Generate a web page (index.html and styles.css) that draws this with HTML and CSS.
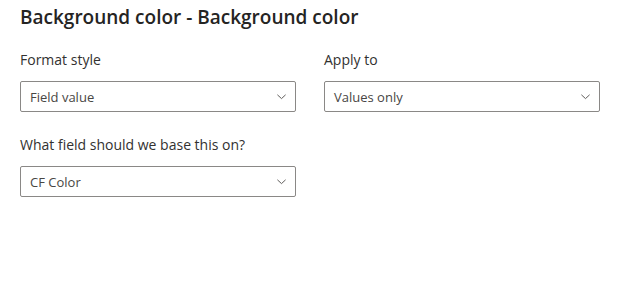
FILE: index.html
```html
<!DOCTYPE html>
<html>
<head>
<meta charset="utf-8">
<link rel="stylesheet" href="styles.css">
</head>
<body>
<div class="panel">
  <h1 class="title">Background color - Background color</h1>
  <div class="row">
    <div class="field">
      <div class="label">Format style</div>
      <div class="dropdown"><span class="value">Field value</span>
        <svg class="chev" width="9" height="6" viewBox="0 0 9 6"><path d="M0.4 0.8 L4.5 4.6 L8.6 0.8" fill="none" stroke="#605e5c" stroke-width="1"/></svg>
      </div>
    </div>
    <div class="field">
      <div class="label">Apply to</div>
      <div class="dropdown"><span class="value">Values only</span>
        <svg class="chev" width="9" height="6" viewBox="0 0 9 6"><path d="M0.4 0.8 L4.5 4.6 L8.6 0.8" fill="none" stroke="#605e5c" stroke-width="1"/></svg>
      </div>
    </div>
  </div>
  <div class="row">
    <div class="field">
      <div class="label">What field should we base this on?</div>
      <div class="dropdown"><span class="value">CF Color</span>
        <svg class="chev" width="9" height="6" viewBox="0 0 9 6"><path d="M0.4 0.8 L4.5 4.6 L8.6 0.8" fill="none" stroke="#605e5c" stroke-width="1"/></svg>
      </div>
    </div>
  </div>
</div>
</body>
</html>
```
FILE: styles.css
```css
html, body {
  margin: 0;
  padding: 0;
  background: #ffffff;
}
body {
  font-family: "Open Sans", "Noto Sans", sans-serif;
  color: #252423;
}
.panel {
  padding: 4px 20px 0 20px;
}
.title {
  margin: 0;
  font-size: 19px;
  font-weight: 600;
  line-height: 26px;
  color: #252423;
}
.row {
  display: flex;
  gap: 28px;
  margin-top: 20px;
}
.row + .row {
  margin-top: 23px;
}
.field {
  width: 276px;
}
.label {
  font-size: 14px;
  line-height: 20px;
  color: #323130;
  margin-bottom: 11px;
}
.dropdown {
  box-sizing: border-box;
  height: 31px;
  border: 1px solid #8a8886;
  border-radius: 2px;
  display: flex;
  align-items: center;
  justify-content: space-between;
  padding: 1px 9px 0 9px;
}
.value {
  font-size: 13px;
  color: #484644;
}
.chev {
  display: block;
}
```
